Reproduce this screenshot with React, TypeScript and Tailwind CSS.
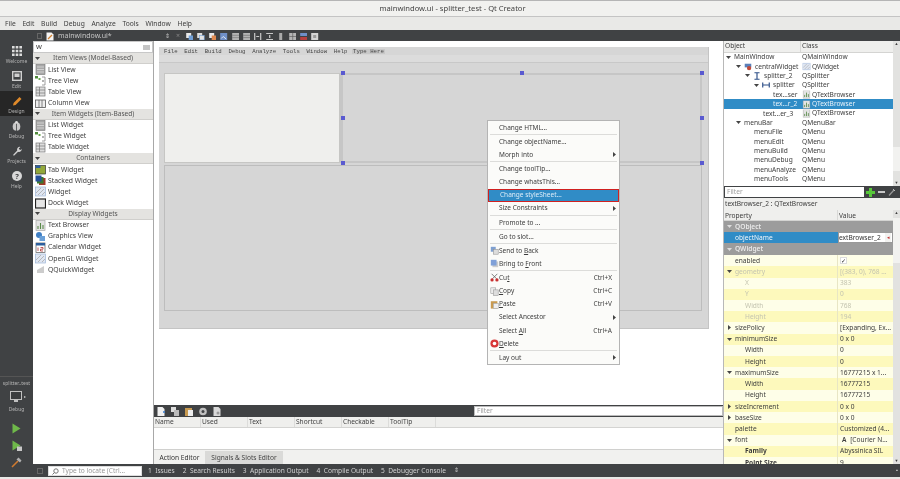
import type { ReactNode } from "react";

const menus = ["File", "Edit", "Build", "Debug", "Analyze", "Tools", "Window", "Help"];

function Arrow({ open = true, dark = false }: { open?: boolean; dark?: boolean }) {
  const color = dark ? "#dddddd" : "#444444";
  return (
    <svg width="5" height="5" viewBox="0 0 5 5" className="shrink-0">
      {open ? <path d="M0 1h5L2.5 4z" fill={color} /> : <path d="M1 0l3 2.5L1 5z" fill={color} />}
    </svg>
  );
}

function Ico({ children, size = 11 }: { children: ReactNode; size?: number }) {
  return (
    <svg width={size} height={size} viewBox="0 0 11 11" className="shrink-0">
      {children}
    </svg>
  );
}

const listIcon = (
  <Ico>
    <rect x="1" y="0.5" width="9" height="10" fill="#a8a8a8" stroke="#777" strokeWidth="0.6" />
    <path d="M2 3h7M2 5.5h7M2 8h7" stroke="#d0d0d0" />
  </Ico>
);
const treeIcon = (
  <Ico>
    <rect x="0" y="1" width="3" height="2.5" fill="#4f8a3a" />
    <rect x="3.5" y="3" width="2" height="2" fill="#6aa84f" />
    <path d="M7 2h3v8H7" fill="#fff" stroke="#777" strokeWidth="0.7" />
    <circle cx="8" cy="6" r="1" fill="#999" />
  </Ico>
);
const tableIcon = (
  <Ico>
    <rect x="1" y="1" width="9" height="9" fill="#dddddd" stroke="#777" strokeWidth="0.7" />
    <path d="M1 4h9M1 7h9M4.5 1v9" stroke="#777" strokeWidth="0.7" />
  </Ico>
);
const columnIcon = (
  <Ico>
    <rect x="0.5" y="2" width="10" height="7.5" fill="#eeeeee" stroke="#555" strokeWidth="0.8" />
    <path d="M4 2v7.5M7 2v7.5" stroke="#666" strokeWidth="0.8" />
  </Ico>
);
const tabIcon = (
  <Ico>
    <rect x="0.5" y="1.5" width="10" height="8.5" fill="#92a83a" stroke="#333" strokeWidth="0.7" />
    <rect x="0.5" y="1.5" width="5" height="2.5" fill="#2d5f9e" />
  </Ico>
);
const stackedIcon = (
  <Ico>
    <rect x="4" y="3" width="6.5" height="7" fill="#a33a2a" />
    <rect x="2" y="2" width="6.5" height="6.5" fill="#3a7a30" />
    <rect x="0.5" y="0.5" width="6" height="6" fill="#27509a" />
  </Ico>
);
const hatchIcon = (
  <Ico>
    <rect x="0.5" y="1" width="10" height="9" fill="#dfe6f2" stroke="#9db5d8" strokeWidth="0.7" />
    <path d="M1 7l5-5M3 9l6-6M7 9l3-3" stroke="#aaa" strokeWidth="0.8" />
  </Ico>
);
const dockIcon = (
  <Ico>
    <rect x="0.5" y="1" width="10" height="9" fill="#e6e6e6" stroke="#222" strokeWidth="1.2" />
  </Ico>
);
const textIcon = (
  <Ico>
    <rect x="1" y="0.5" width="9" height="10" fill="#e4e4e4" stroke="#aaa" strokeWidth="0.7" />
    <path d="M3 9V6M5.5 9V3M8 9V5" stroke="#5a8a4a" strokeWidth="1.1" />
  </Ico>
);
const graphicsIcon = (
  <Ico>
    <circle cx="4" cy="4" r="3" fill="#3f7fc4" />
    <rect x="4.5" y="5" width="5.5" height="5" fill="#6aa0d8" />
  </Ico>
);
const calendarIcon = (
  <Ico>
    <rect x="1" y="1" width="9" height="9.5" fill="#fff" stroke="#555" strokeWidth="0.7" />
    <rect x="1" y="1" width="9" height="2.5" fill="#2d5f9e" />
    <path d="M3 5.5v3.5M5.5 5.5h2.5v1.7h-2.5v1.8h2.5" stroke="#b03030" strokeWidth="0.8" fill="none" />
  </Ico>
);
const quickIcon = (
  <Ico>
    <path d="M2 6l7-4v7H2z" fill="#cccccc" />
  </Ico>
);

const widgetBox: { title: string; items: [string, ReactNode][] }[] = [
  { title: "Item Views (Model-Based)", items: [["List View", listIcon], ["Tree View", treeIcon], ["Table View", tableIcon], ["Column View", columnIcon]] },
  { title: "Item Widgets (Item-Based)", items: [["List Widget", listIcon], ["Tree Widget", treeIcon], ["Table Widget", tableIcon]] },
  { title: "Containers", items: [["Tab Widget", tabIcon], ["Stacked Widget", stackedIcon], ["Widget", hatchIcon], ["Dock Widget", dockIcon]] },
  { title: "Display Widgets", items: [["Text Browser", textIcon], ["Graphics View", graphicsIcon], ["Calendar Widget", calendarIcon], ["OpenGL Widget", hatchIcon], ["QQuickWidget", quickIcon]] },
];

// form editor tools: stacked widgets first, then the layout buttons
const toolbarIcons: ReactNode[] = [
  <><rect width="5" height="5" fill="#e8e8e8" /><rect x="2.5" y="2.5" width="4.5" height="4.5" fill="#6f9fd8" /></>,
  <><rect width="5" height="5" fill="#dcdcdc" /><rect x="2.5" y="2.5" width="4.5" height="4.5" fill="#e4e4e4" stroke="#6f9fd8" strokeWidth="0.6" /></>,
  <><rect width="5" height="5" fill="#e8e8e8" /><rect x="2.5" y="2.5" width="4.5" height="4.5" fill="#e08a50" /></>,
  <><rect width="7" height="7" fill="#6f8fc8" /><path d="M1 5.5l2-2 3 2.5" stroke="#dde6f5" fill="none" /></>,
  <><rect width="7" height="7" fill="#b4b4b4" /><path d="M0 2.3h7M0 4.6h7" stroke="#666" strokeWidth="0.5" /></>,
  <><rect width="7" height="7" fill="#b4b4b4" /><path d="M0 2.3h7M0 4.6h7" stroke="#666" strokeWidth="0.6" /></>,
  <><path d="M0.5 0v7M6.5 0v7M2 3.5h3" stroke="#c8c8c8" strokeWidth="1.2" /></>,
  <><path d="M0 0.5h7M0 6.5h7M3.5 2v3" stroke="#c8c8c8" strokeWidth="1.2" /></>,
  <><rect x="2" width="3" height="7" fill="#aaaaaa" /></>,
  <><rect width="7" height="7" fill="#b4b4b4" /><path d="M0 3.5h7M3.5 0v7" stroke="#555" strokeWidth="0.6" /></>,
  <><rect width="7" height="3" fill="#6f8fc8" /><rect y="4" width="7" height="3" fill="#b84040" /></>,
  <><rect width="7" height="7" fill="#d4d4d4" /><rect x="2" y="2" width="3" height="3" fill="#999" /></>,
];

type Obj = { name: string; cls: string; pad: string; arrow?: boolean; icon?: ReactNode; clsIcon?: ReactNode; selected?: boolean };
const objects: Obj[] = [
  { name: "MainWindow", cls: "QMainWindow", pad: "pl-[2px]", arrow: true },
  { name: "centralWidget", cls: "QWidget", pad: "pl-[12px]", arrow: true, icon: <Ico size={8}><rect x="1" y="1" width="9" height="5" fill="#5a7fb8" /><circle cx="7" cy="7" r="3" fill="#c04a3a" /></Ico>, clsIcon: hatchIcon },
  { name: "splitter_2", cls: "QSplitter", pad: "pl-[21px]", arrow: true, icon: <Ico size={8}><path d="M2 1h7M2 10h7M5.5 1v9" stroke="#2d4f88" strokeWidth="1.6" /></Ico> },
  { name: "splitter", cls: "QSplitter", pad: "pl-[30px]", arrow: true, icon: <Ico size={8}><path d="M1 2v7M10 2v7M1 5.5h9" stroke="#2d4f88" strokeWidth="1.6" /></Ico> },
  { name: "tex...ser", cls: "QTextBrowser", pad: "pl-[49px]", clsIcon: textIcon },
  { name: "tex...r_2", cls: "QTextBrowser", pad: "pl-[49px]", clsIcon: textIcon, selected: true },
  { name: "text...er_3", cls: "QTextBrowser", pad: "pl-[39px]", clsIcon: textIcon },
  { name: "menuBar", cls: "QMenuBar", pad: "pl-[12px]", arrow: true },
  { name: "menuFile", cls: "QMenu", pad: "pl-[30px]" },
  { name: "menuEdit", cls: "QMenu", pad: "pl-[30px]" },
  { name: "menuBuild", cls: "QMenu", pad: "pl-[30px]" },
  { name: "menuDebug", cls: "QMenu", pad: "pl-[30px]" },
  { name: "menuAnalyze", cls: "QMenu", pad: "pl-[30px]" },
  { name: "menuTools", cls: "QMenu", pad: "pl-[30px]" },
];

type Prop = { name: string; value?: ReactNode; level?: 0 | 1; arrow?: "open" | "closed"; dim?: boolean; bold?: boolean };
const props: Prop[] = [
  { name: "enabled", value: <span className="flex h-[7px] w-[7px] items-center justify-center border border-[#ddd] bg-white text-[6px] leading-none text-[#222]">✓</span> },
  { name: "geometry", value: "[(383, 0), 768 ...", arrow: "open", dim: true },
  { name: "X", value: "383", level: 1, dim: true },
  { name: "Y", value: "0", level: 1, dim: true },
  { name: "Width", value: "768", level: 1, dim: true },
  { name: "Height", value: "194", level: 1, dim: true },
  { name: "sizePolicy", value: "[Expanding, Ex...", arrow: "closed" },
  { name: "minimumSize", value: "0 x 0", arrow: "open" },
  { name: "Width", value: "0", level: 1 },
  { name: "Height", value: "0", level: 1 },
  { name: "maximumSize", value: "16777215 x 1...", arrow: "open" },
  { name: "Width", value: "16777215", level: 1 },
  { name: "Height", value: "16777215", level: 1 },
  { name: "sizeIncrement", value: "0 x 0", arrow: "closed" },
  { name: "baseSize", value: "0 x 0", arrow: "closed" },
  { name: "palette", value: "Customized (4..." },
  { name: "font", value: <span><span className="mx-[2px] font-semibold">A</span> [Courier N...</span>, arrow: "open" },
  { name: "Family", value: "Abyssinica SIL", level: 1, bold: true },
  { name: "Point Size", value: "9", level: 1, bold: true },
];

type Item = { label: ReactNode; shortcut?: string; sub?: boolean; icon?: ReactNode; active?: boolean } | "sep";
const u = (a: string, k: string, b: string) => (
  <>
    {a}
    <span className="underline">{k}</span>
    {b}
  </>
);
const contextMenu: Item[] = [
  { label: "Change HTML..." },
  "sep",
  { label: "Change objectName..." },
  { label: "Morph into", sub: true },
  "sep",
  { label: "Change toolTip..." },
  { label: "Change whatsThis..." },
  { label: "Change styleSheet...", active: true },
  { label: "Size Constraints", sub: true },
  "sep",
  { label: "Promote to ..." },
  "sep",
  { label: "Go to slot..." },
  "sep",
  { label: u("Send to ", "B", "ack"), icon: <Ico size={9}><rect x="1" y="1" width="6" height="6" fill="#7fa0d0" /><rect x="4" y="4" width="6" height="6" fill="#ddd" stroke="#888" strokeWidth="0.6" /></Ico> },
  { label: u("Bring to ", "F", "ront"), icon: <Ico size={9}><rect x="3" y="3" width="7" height="7" fill="#ccc" /><rect x="1" y="1" width="7" height="7" fill="#7fa0d8" /></Ico> },
  "sep",
  { label: u("Cu", "t", ""), shortcut: "Ctrl+X", icon: <Ico size={9}><path d="M2 1l6 6M9 1L3 7" stroke="#666" strokeWidth="1" /><circle cx="2.5" cy="8.5" r="2" fill="#c83030" /><circle cx="8.5" cy="8.5" r="2" fill="#c83030" /></Ico> },
  { label: u("", "C", "opy"), shortcut: "Ctrl+C", icon: <Ico size={9}><rect x="1" y="1" width="6" height="7" fill="#eee" stroke="#999" strokeWidth="0.7" /><rect x="4" y="3.5" width="6" height="7" fill="#ddd" stroke="#999" strokeWidth="0.7" /></Ico> },
  { label: u("", "P", "aste"), shortcut: "Ctrl+V", icon: <Ico size={9}><rect x="1" y="1.5" width="8" height="9" fill="#c89a50" /><rect x="4" y="4" width="6.5" height="6.5" fill="#eee" stroke="#999" strokeWidth="0.6" /></Ico> },
  { label: "Select Ancestor", sub: true },
  { label: u("Select ", "A", "ll"), shortcut: "Ctrl+A" },
  { label: u("", "D", "elete"), icon: <Ico size={9}><circle cx="5.5" cy="5.5" r="5" fill="#d83838" /><circle cx="5.5" cy="5.5" r="2.2" fill="#fff" /></Ico> },
  "sep",
  { label: "Lay out", sub: true },
];

const statusItems = ["1  Issues", "2  Search Results", "3  Application Output", "4  Compile Output", "5  Debugger Console"];

function ModeButton({ label, children, active }: { label: string; children: ReactNode; active?: boolean }) {
  return (
    <div className={`flex h-[25px] flex-col items-center pt-[5px] ${active ? "bg-[#262626]" : ""}`}>
      {children}
      <span className="mt-[2px] text-[5px] leading-[6px] text-[#b4b4b4]">{label}</span>
    </div>
  );
}

function Handle({ className }: { className: string }) {
  return <div className={`absolute h-[4px] w-[4px] bg-[#5a5ad0] ${className}`} />;
}

export default function App() {
  return (
    <div className="relative flex h-[479px] w-[900px] flex-col overflow-hidden bg-[#e8e8e6] font-['Noto_Sans',sans-serif] text-[6.6px] text-[#3c3c3c] blur-[0.3px]">
      <div className="flex h-[17px] items-center justify-center border-t border-b border-t-[#b5b5b5] border-b-[#c4c4c4] bg-[#f1f1ef] pl-[5px] text-[7.6px] text-[#444]">
        mainwindow.ui - splitter_test - Qt Creator
      </div>
      <div className="flex h-[13px] items-center gap-[6.7px] bg-[#e9e9e7] pl-[5px] pt-[1px] text-[6.7px]">
        {menus.map((m) => (
          <span key={m}>{m}</span>
        ))}
      </div>

      <div className="flex h-[11px] items-center bg-[#404244] pt-[1px] text-[#c8c8c8]">
        <div className="ml-[37px] h-[6px] w-[5px] border border-[#666]" />
        <svg width="8" height="9" viewBox="0 0 8 9" className="ml-[4px]">
          <path d="M0.5 0.5h5l2 2v6h-7z" fill="#f4f4f4" />
          <path d="M2 7l4-4" stroke="#d08030" strokeWidth="1.3" />
        </svg>
        <span className="ml-[4px] w-[60px] text-[7px] text-[#c4c4c4]">mainwindow.ui*</span>
        <span className="ml-[47px] text-[6px]">⇕</span>
        <span className="ml-[6px] text-[7px] text-[#888]">×</span>
        <div className="ml-[6px] flex gap-[4px]">
          {toolbarIcons.map((icon, i) => (
            <svg key={i} width="7.4" height="7" viewBox="0 0 7 7">
              {icon}
            </svg>
          ))}
        </div>
      </div>

      <div className="flex h-[436px]">
        {/* mode bar */}
        <div className="flex w-[33px] shrink-0 flex-col bg-[#404244]">
          <div className="flex flex-col">
            <ModeButton label="Welcome">
              <svg width="10" height="10" viewBox="0 0 10 10">
                <path d="M0 0h2.6v2.6H0zM3.7 0h2.6v2.6H3.7zM7.4 0H10v2.6H7.4zM0 3.7h2.6v2.6H0zM3.7 3.7h2.6v2.6H3.7zM7.4 3.7H10v2.6H7.4zM0 7.4h2.6V10H0zM3.7 7.4h2.6V10H3.7zM7.4 7.4H10V10H7.4z" fill="#dcdcdc" />
              </svg>
            </ModeButton>
            <ModeButton label="Edit">
              <svg width="10" height="10" viewBox="0 0 10 10">
                <rect x="0.7" y="0.7" width="8.6" height="8.6" fill="none" stroke="#d0d0d0" strokeWidth="1.4" />
                <rect x="2.5" y="2.5" width="5" height="3.5" fill="#d0d0d0" />
              </svg>
            </ModeButton>
            <ModeButton label="Design" active>
              <svg width="10" height="10" viewBox="0 0 10 10">
                <path d="M1 9.5l.6-2.6L7.5 1l2 2-5.9 5.9z" fill="#e08a2a" />
              </svg>
            </ModeButton>
            <ModeButton label="Debug">
              <svg width="9" height="10" viewBox="0 0 9 10">
                <ellipse cx="4.5" cy="5.5" rx="3.8" ry="4.3" fill="#c8c8c8" />
                <path d="M4.5 1v9" stroke="#404244" strokeWidth="0.8" />
                <circle cx="4.5" cy="1.4" r="1.4" fill="#dddddd" />
              </svg>
            </ModeButton>
            <ModeButton label="Projects">
              <svg width="10" height="10" viewBox="0 0 10 10">
                <path d="M1 9l4.2-4.6A2.6 2.6 0 0 1 8.4 1L6.8 2.6l.6 1 1.2.3 1-1.2a2.6 2.6 0 0 1-3.5 3L2 9.8z" fill="#cfcfcf" />
              </svg>
            </ModeButton>
            <ModeButton label="Help">
              <svg width="10" height="10" viewBox="0 0 10 10">
                <circle cx="5" cy="5" r="5" fill="#d8d8d8" />
                <text x="5" y="7.7" textAnchor="middle" fontSize="7.5" fontWeight="700" fill="#404244" fontFamily="Noto Sans, sans-serif">?</text>
              </svg>
            </ModeButton>
          </div>
          <div className="mb-[8px] mt-auto border-t border-[#555] pt-[2px]">
            <div className="text-center text-[5px] leading-[9px] text-[#b4b4b4]">splitter..test</div>
            <div className="mt-[2px] flex h-[13px] items-center justify-center pl-[2px]">
              <svg width="12" height="12" viewBox="0 0 12 12">
                <rect x="0.5" y="0.5" width="11" height="8" fill="#3a3c3e" stroke="#c0c0c0" />
                <path d="M4 11h4V9H4z" fill="#c0c0c0" />
              </svg>
              <span className="ml-[2px] text-[4px] text-[#ccc]">▸</span>
            </div>
            <div className="mt-[3px] text-center text-[5px] leading-[6px] text-[#b4b4b4]">Debug</div>
            <div className="mt-[11px] flex h-[12px] justify-center">
              <svg width="9" height="11" viewBox="0 0 9 11"><path d="M0.5 0.5L8.5 5.5 0.5 10.5z" fill="#6fb84a" /></svg>
            </div>
            <div className="mt-[5px] flex h-[12px] justify-center">
              <svg width="10" height="11" viewBox="0 0 10 11">
                <path d="M0.5 0.5L8.5 5.5 0.5 10.5z" fill="#6fb84a" />
                <rect x="5" y="6.5" width="5" height="4.5" fill="#c8c8c8" />
              </svg>
            </div>
            <div className="mt-[5px] flex h-[12px] justify-center">
              <svg width="11" height="11" viewBox="0 0 11 11">
                <path d="M1 10L7 4" stroke="#d07a30" strokeWidth="1.6" />
                <path d="M5.5 2.5L7.5 0.5l3 3-1.5 2z" fill="#b0b0b0" />
              </svg>
            </div>
          </div>
        </div>

        <div className="flex min-w-0 flex-1 flex-col">
          <div className="flex h-[423px]">
            {/* widget box */}
            <div className="w-[121px] shrink-0 border-r border-[#a8a8a8] bg-white">
              <div className="flex h-[12px] items-center justify-between border border-[#c8c8c8] px-[2px] text-[7.5px]">
                <span>w</span>
                <span className="h-[5px] w-[7px] bg-[#c4c4c4]" />
              </div>
              {widgetBox.map((group) => (
                <div key={group.title}>
                  <div className="relative flex h-[11.2px] items-center justify-center border-b border-[#d0cfcc] bg-[#e4e3e0] text-[6.6px] text-[#555]">
                    <span className="absolute left-[2px]">
                      <Arrow />
                    </span>
                    {group.title}
                  </div>
                  {group.items.map(([name, icon]) => (
                    <div key={name} className="flex h-[11.1px] items-center pl-[2px] text-[6.8px] text-[#3c3c3c]">
                      {icon}
                      <span className="ml-[2px]">{name}</span>
                    </div>
                  ))}
                </div>
              ))}
            </div>

            {/* designer area */}
            <div className="flex w-[569px] shrink-0 flex-col">
              <div className="h-[364px] overflow-hidden bg-white pl-[5px] pt-[6px]">
                <div className="h-[282px] w-[550px] border-b border-r border-[#c4c4c4] bg-[#d6d6d6]">
                  <div className="flex h-[8px] items-center gap-[6.7px] pl-[5px] pt-[1px] font-['Liberation_Mono',monospace] text-[5.7px] leading-none text-[#444]">
                    {menus.map((m) => (
                      <span key={m}>{m}</span>
                    ))}
                    <span className="ml-[-2px] bg-[#c8c8c8] px-[1px]">Type Here</span>
                  </div>
                  <div className="h-[7px] bg-[#dcdcdc]" />
                  <div className="h-[266px] border-t border-[#c8c8c8] bg-[radial-gradient(#bdbdbd_0.5px,transparent_0.6px)] bg-[size:10px_10px] pb-[17px] pl-[5px] pr-[6px] pt-[10px]">
                    <div className="relative flex h-full flex-col gap-[2px]">
                      <div className="flex h-[90px] gap-[3px] bg-[#c6c6c6]">
                        <div className="w-[176px] border border-[#c6c6c4] bg-[#efefed]" />
                        <div className="flex-1 border-2 border-l-0 border-[#c6c6c6] bg-[#d6d6d6]" />
                      </div>
                      <div className="flex-1 border border-[#bdbdbd] bg-[#d6d6d6]" />
                      <Handle className="left-[177px] top-[-2px]" />
                      <Handle className="left-[356px] top-[-2px]" />
                      <Handle className="left-[536px] top-[-2px]" />
                      <Handle className="left-[177px] top-[43px]" />
                      <Handle className="left-[536px] top-[43px]" />
                      <Handle className="left-[177px] top-[88px]" />
                      <Handle className="left-[536px] top-[88px]" />
                    </div>
                  </div>
                </div>
              </div>

              {/* action editor */}
              <div className="flex h-[59px] flex-col bg-white">
                <div className="flex h-[12px] items-center bg-[#404244] pl-[3px]">
                  <div className="flex w-[317px] gap-[6px]">
                    <svg width="8" height="9" viewBox="0 0 8 9"><path d="M0.5 0h5l2 2v7h-7z" fill="#f0f0f0" /><path d="M6 5h2" stroke="#3a7fd0" strokeWidth="1.5" /></svg>
                    <svg width="8" height="9" viewBox="0 0 8 9"><rect width="5" height="5" fill="#ddd" /><rect x="3" y="3" width="5" height="6" fill="#bbb" /></svg>
                    <svg width="8" height="9" viewBox="0 0 8 9"><rect y="1" width="7" height="8" fill="#c89a50" /><rect x="3" y="3" width="5" height="6" fill="#eee" /></svg>
                    <svg width="8" height="9" viewBox="0 0 8 9"><circle cx="4" cy="4.5" r="3.8" fill="#c0c0c0" /><circle cx="4" cy="4.5" r="1.5" fill="#404244" /></svg>
                    <svg width="8" height="9" viewBox="0 0 8 9"><path d="M0.5 0h5l2 2v7h-7z" fill="#d8d8d8" /><circle cx="5" cy="6" r="1.5" fill="#999" /></svg>
                  </div>
                  <div className="flex h-[10px] flex-1 items-center border border-[#bbb] bg-white pl-[2px] text-[#999]">Filter</div>
                </div>
                <div className="flex h-[11px] border-b border-[#d4d4d2] bg-[#efefed] text-[#444]">
                  {["Name", "Used", "Text", "Shortcut", "Checkable", "ToolTip"].map((h) => (
                    <div key={h} className="w-[47px] border-r border-[#dcdcda] pl-[1px] leading-[10px]">
                      {h}
                    </div>
                  ))}
                </div>
                <div className="h-[21px]" />
                <div className="flex h-[15px] border-t border-[#d0d0ce] bg-[#f1f1ef] pt-[1px]">
                  <div className="flex w-[51px] items-center justify-center text-[#333]">Action Editor</div>
                  <div className="flex w-[78px] items-center justify-center bg-[#dadad8] text-[#444]">Signals &amp; Slots Editor</div>
                </div>
              </div>
            </div>

            {/* right column */}
            <div className="flex min-w-0 flex-1 flex-col border-l border-[#b8b8b8] bg-white">
              <div className="flex h-[145px]">
                <div className="min-w-0 flex-1 overflow-hidden">
                  <div className="flex h-[11.5px] border-b border-[#d4d4d2] bg-[#efefed] leading-[10px]">
                    <div className="w-[77px] border-r border-[#d8d8d6] pl-[1px]">Object</div>
                    <div className="pl-[1px]">Class</div>
                  </div>
                  {objects.map((o) => (
                    <div key={o.name} className={`flex h-[9.38px] items-center ${o.selected ? "bg-[#308cc6] text-[#e8f2fa]" : ""}`}>
                      <div className={`flex w-[77px] items-center ${o.pad}`}>
                        {o.arrow && <Arrow />}
                        {o.icon && <span className="ml-[3px]">{o.icon}</span>}
                        <span className={o.icon || o.arrow ? "ml-[3px]" : ""}>{o.name}</span>
                      </div>
                      <div className="flex items-center pl-[1px]">
                        {o.clsIcon && <span className="ml-[-1px] mr-0 scale-75">{o.clsIcon}</span>}
                        {o.cls}
                      </div>
                    </div>
                  ))}
                </div>
                <div className="flex w-[7px] shrink-0 flex-col items-center justify-between bg-[#e2e2e0]">
                  <span className="text-[4px] leading-[6px]">▲</span>
                  <div className="mb-auto mt-[100px] h-[24px] w-full bg-[#f2f2f0]" />
                  <span className="text-[4px] leading-[6px]">▼</span>
                </div>
              </div>
              <div className="flex h-[12px] items-center bg-[#404244] pl-[1px]">
                <div className="flex h-[10px] w-[139px] items-center bg-white pl-[2px] text-[#a0a0a0]">Filter</div>
                <svg width="9" height="9" viewBox="0 0 9 9" className="ml-[2px]"><path d="M3 0h3v3h3v3H6v3H3V6H0V3h3z" fill="#58c83a" /></svg>
                <span className="ml-[3px] h-[2px] w-[7px] bg-[#c8c8c8]" />
                <svg width="8" height="8" viewBox="0 0 8 8" className="ml-[3px]"><path d="M1 7.5L6 2" stroke="#999" strokeWidth="1.2" /><path d="M5 1l2 2" stroke="#bbb" /></svg>
              </div>
              <div className="flex h-[12px] items-center bg-[#efefed] pb-[1px] pl-[1px]">textBrowser_2 : QTextBrowser</div>
              <div className="flex min-h-0 flex-1">
                <div className="min-w-0 flex-1 overflow-hidden">
                  <div className="flex h-[11px] border-b border-[#d4d4d2] bg-[#efefed] leading-[11px]">
                    <div className="w-[114px] border-r border-[#d8d8d6] pl-[1px]">Property</div>
                    <div className="pl-[1px]">Value</div>
                  </div>
                  <div className="flex h-[11.2px] items-center gap-[3px] bg-[#9c9c9c] pl-[3px] font-semibold text-[#e8e8e8]">
                    <Arrow dark />
                    QObject
                  </div>
                  <div className="flex h-[11.2px] items-center">
                    <div className="flex h-full w-[114px] items-center bg-[#308cc6] pl-[11px] text-[#f0f6fb]">objectName</div>
                    <div className="flex h-full flex-1 items-center overflow-hidden border border-[#999] bg-white">
                      <span className="w-[45px] overflow-hidden whitespace-nowrap text-[#333]">extBrowser_2</span>
                      <span className="ml-[1px] h-full w-[6px] bg-[#f2f2f0] text-center text-[5px] leading-[8px] text-[#c03030]">◂</span>
                    </div>
                  </div>
                  <div className="flex h-[11.7px] items-center gap-[3px] bg-[#9c9c9c] pl-[3px] font-semibold text-[#e8e8e8]">
                    <Arrow dark />
                    QWidget
                  </div>
                  {props.map((p, i) => (
                    <div key={p.name + i} className={`flex h-[11.22px] items-center ${i % 2 === 0 ? "bg-[#fefee8]" : "bg-[#fdf9bc]"}`}>
                      <div className={`flex h-full w-[114px] items-center border-r border-[#e8e6c4] ${p.level ? "pl-[21px]" : "pl-[3px]"} ${p.dim ? "text-[#c4c4b0]" : ""} ${p.bold ? "font-bold" : ""}`}>
                        {!p.level && <span className="flex w-[8px] shrink-0">{p.arrow && <Arrow open={p.arrow === "open"} />}</span>}
                        {p.name}
                      </div>
                      <div className={`flex items-center whitespace-nowrap pl-[2px] ${p.dim ? "text-[#c4c4b0]" : ""}`}>{p.value}</div>
                    </div>
                  ))}
                </div>
                <div className="flex w-[7px] shrink-0 flex-col items-center justify-between bg-[#e2e2e0]">
                  <span className="text-[4px] leading-[6px]">▲</span>
                  <div className="mb-auto mt-[2px] h-[45px] w-full bg-[#f2f2f0]" />
                  <span className="text-[4px] leading-[6px]">▼</span>
                </div>
              </div>
            </div>
          </div>

          {/* status bar */}
          <div className="flex h-[13px] items-center bg-[#404244] pt-[1px] text-[#d0d0d0]">
            <div className="ml-[4px] h-[6px] w-[6px] border border-[#666]" />
            <div className="ml-[5px] flex h-[10px] w-[94px] items-center gap-[3px] border border-[#ddd] bg-white pl-[3px] text-[#999]">
              <svg width="7" height="7" viewBox="0 0 7 7"><circle cx="4" cy="3" r="2.2" fill="none" stroke="#777" /><path d="M2.5 4.5L0.5 6.5" stroke="#777" /></svg>
              Type to locate (Ctrl...
            </div>
            <div className="ml-[6px] flex gap-[8px] whitespace-pre">
              {statusItems.map((s) => (
                <span key={s}>{s}</span>
              ))}
              <span className="text-[6px]">⇕</span>
            </div>
            <span className="ml-auto mr-[2px] text-[5px] text-[#ddd]">▪</span>
          </div>
        </div>
      </div>

      <div className="h-[2px] bg-[#e8e8e6]" />

      {/* context menu */}
      <div className="absolute left-[487px] top-[120px] w-[133px] border border-[#b4b4b4] bg-[#fbfbf9] text-[6.5px] text-[#3c3c3c]">
        {contextMenu.map((item, i) =>
          item === "sep" ? (
            <div key={i} className="mx-[2px] h-[1px] bg-[#dcdcda]" />
          ) : (
            <div key={i} className={`relative flex h-[13.13px] items-center pl-[11px] pr-[7px] ${item.active ? "border border-[#d02020] bg-[#308cc6] text-[#dcecf8]" : ""}`}>
              {item.icon && <span className="absolute left-[2px] top-[2px]">{item.icon}</span>}
              <span>{item.label}</span>
              {item.shortcut && <span className="ml-auto">{item.shortcut}</span>}
              {item.sub && <span className="absolute right-[2px] top-[4px]"><Arrow open={false} /></span>}
            </div>
          ),
        )}
      </div>
    </div>
  );
}
